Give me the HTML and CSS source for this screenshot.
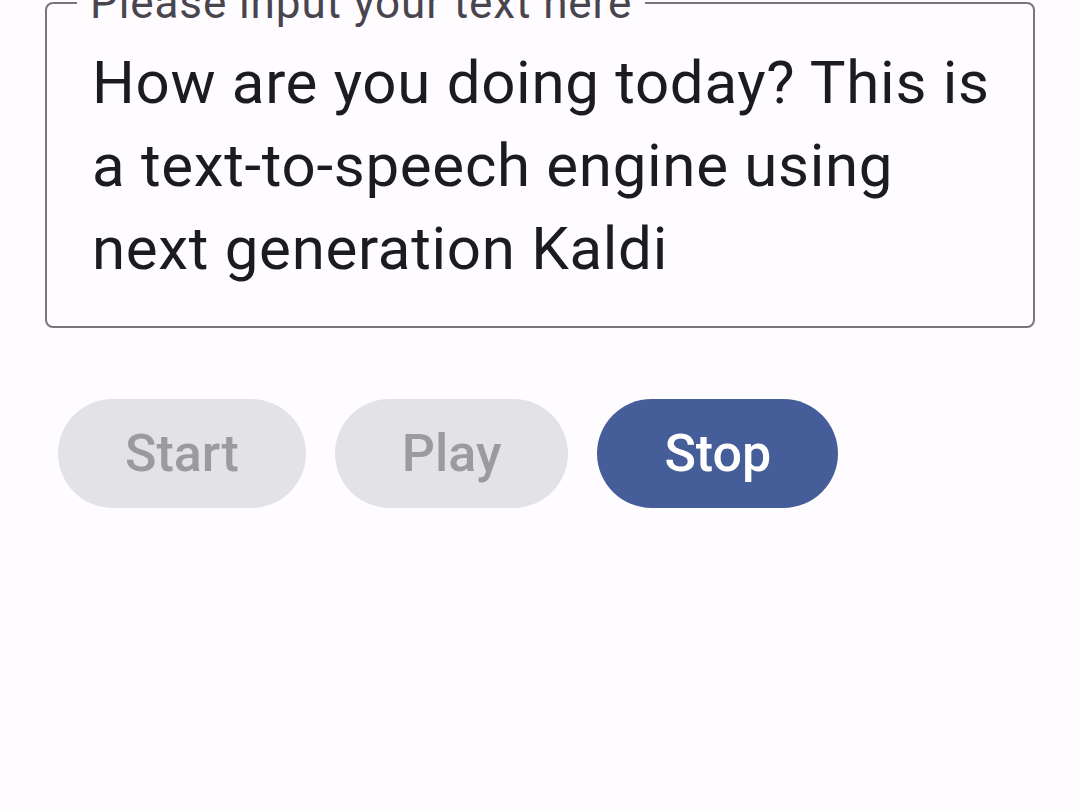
FILE: index.html
```html
<!DOCTYPE html>
<html>

<head>
    <link rel="stylesheet" href="styles.css">
</head>

<body>

    <div id="app">
        <fieldset class="field">
            <legend class="field-label">Please input your text here</legend>
            <div class="field-text">How are you doing today? This is a text-to-speech engine using next generation Kaldi</div>
        </fieldset>

        <div class="buttons">
            <button class="btn btn-off">Start</button>
            <button class="btn btn-off">Play</button>
            <button class="btn btn-on">Stop</button>
        </div>
    </div>

</body>

</html>
```

FILE: styles.css
```css
body {
    font-family: Roboto, "Noto Sans", sans-serif;
    background-color: #fffcff;
    margin: 0;
    height: 100vh;
    overflow: hidden;
}

#app {
    padding: 0 45px;
}

.field {
    margin: -22px 0 0 0;
    padding: 13px 36px 36px 45px;
    border: 2.5px solid #79767a;
    border-radius: 8px;
    min-width: 0;
}

.field-label {
    font-size: 44px;
    line-height: 50px;
    letter-spacing: 0.9px;
    color: #49454f;
    padding: 0 13px;
    margin-left: -15px;
}

.field-text {
    font-size: 60px;
    line-height: 83px;
    letter-spacing: 0.7px;
    color: #1c1b1f;
}

.buttons {
    display: flex;
    gap: 29px;
    padding: 71px 0 0 13px;
}

.btn {
    height: 109px;
    border: none;
    border-radius: 55px;
    font-family: Roboto, "Noto Sans", sans-serif;
    font-size: 52px;
    font-weight: 500;
    padding: 0 67px;
}

.btn-off {
    background-color: #e3e2e6;
    color: #9c9a9f;
}

.btn-on {
    background-color: #455d99;
    color: #ffffff;
}
```
